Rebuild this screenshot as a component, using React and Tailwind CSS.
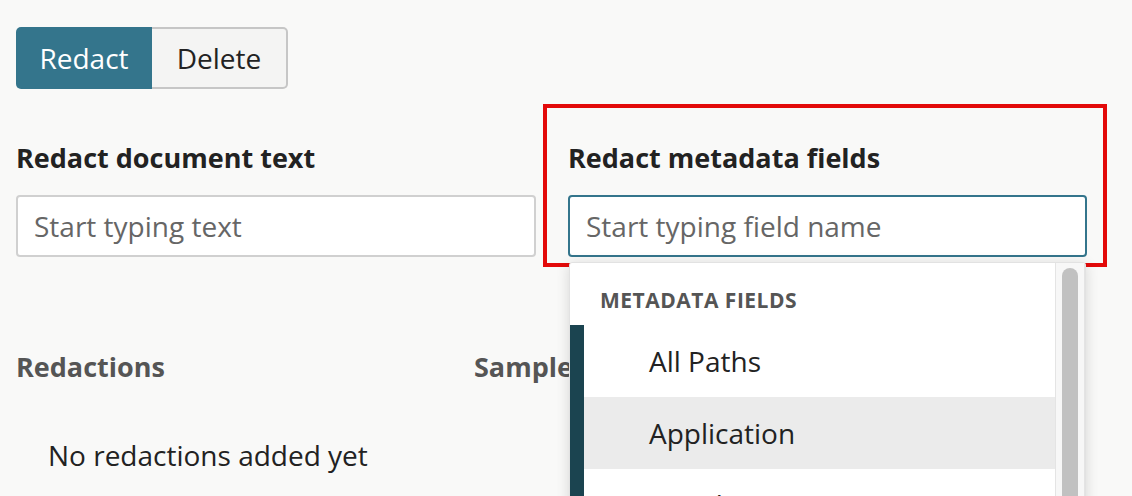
import React from 'react';

const fields = ['All Paths', 'Application', 'Attachment Count'];

const RedactPanel = () => {
    return (
        <div className="min-h-screen bg-[#f9f9f8] font-['Open_Sans',sans-serif] text-[28px] text-[#222]">
            <div className="pl-4 pt-[27px]">
                <div className="flex">
                    <button className="h-[62px] w-[136px] rounded-l-[5px] bg-[#34758c] text-white">Redact</button>
                    <button className="h-[62px] w-[136px] rounded-r-[5px] border-2 border-l-0 border-[#c6c6c6] bg-[#f4f4f3] text-[#222]">Delete</button>
                </div>

                <div className="mt-[51px] grid grid-cols-[520px_519px] gap-x-8">
                    <div>
                        <h2 className="h-9 text-[27px] leading-9 font-bold">Redact document text</h2>
                        <input
                            className="mt-[19px] h-[62px] w-full rounded-[4px] border-2 border-[#d0d0d0] bg-white px-4 text-[#222] placeholder:text-[#666] outline-none"
                            placeholder="Start typing text"
                        />
                    </div>

                    <div className="relative">
                        <h2 className="h-9 text-[27px] leading-9 font-bold">Redact metadata fields</h2>
                        <input
                            className="mt-[19px] h-[62px] w-full rounded-[4px] border-2 border-[#34758c] bg-white px-4 text-[#222] placeholder:text-[#666] outline-none"
                            placeholder="Start typing field name"
                        />

                        {/* annotation box */}
                        <div className="pointer-events-none absolute left-[-25px] top-[-36px] h-[163px] w-[564px] border-4 border-[#e30a0a]"></div>

                        {/* dropdown menu */}
                        <div className="absolute left-px top-[122px] z-10 flex h-[300px] w-[517px] overflow-hidden rounded-t-[3px] border border-[#e2e2e2] bg-white shadow-[0_2px_14px_rgba(0,0,0,0.14)]">
                            <div className="flex-1">
                                <div className="h-[62px] pl-[30px] pt-[22px] text-[21px] leading-[30px] font-bold tracking-[0.5px] uppercase text-[#555]">Metadata fields</div>
                                <div className="border-l-[14px] border-[#1b4450]">
                                    {fields.map((f, i) => (
                                        <div
                                            key={f}
                                            className={i === 1 ? 'flex h-[72px] items-center bg-[#ebebeb] pl-[65px]' : 'flex h-[72px] items-center pl-[65px]'}
                                        >
                                            {f}
                                        </div>
                                    ))}
                                </div>
                            </div>
                            <div className="w-[30px] border-x border-[#e4e4e4] bg-[#f7f7f7] px-[6px] pt-[5px]">
                                <div className="h-full rounded-full bg-[#c1c1c1]"></div>
                            </div>
                        </div>
                    </div>
                </div>

                <div className="mt-[92px] grid grid-cols-[458px_1fr]">
                    <h3 className="h-9 text-[27px] leading-9 font-bold text-[#555]">Redactions</h3>
                    <h3 className="h-9 text-[27px] leading-9 font-bold text-[#555]">Sample</h3>
                </div>
                <p className="mt-[52px] pl-[32px] leading-9">No redactions added yet</p>
            </div>
        </div>
    );
};

export default function App() {
    return <RedactPanel />;
}
